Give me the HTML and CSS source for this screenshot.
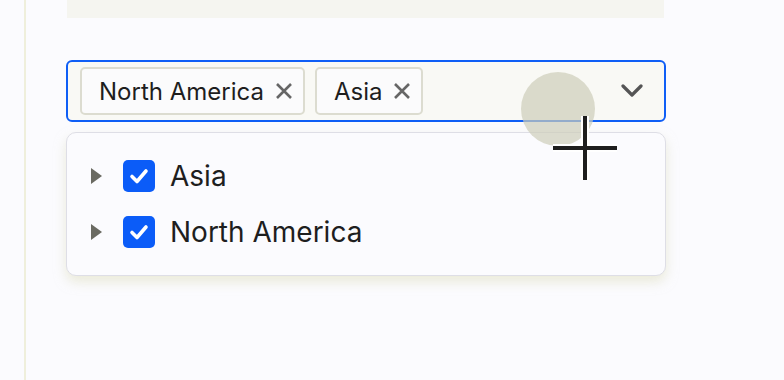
FILE: index.html
```html
<!DOCTYPE html>
<html>
<head>
<meta charset="utf-8">
<link rel="stylesheet" href="styles.css">
</head>
<body>
<div class="page">
  <div class="column">
    <div class="topbox"></div>
    <div class="select">
      <div class="tags">
        <span class="tag">North America<svg class="x" viewBox="0 0 18 18"><path d="M2 2L16 16M16 2L2 16"/></svg></span>
        <span class="tag">Asia<svg class="x" viewBox="0 0 18 18"><path d="M2 2L16 16M16 2L2 16"/></svg></span>
      </div>
      <svg class="chev" viewBox="0 0 22 14"><path d="M2 2L11 11L20 2"/></svg>
      <div class="ripple"></div>
    </div>
    <div class="menu">
      <div class="row"><span class="caret"></span><span class="cb"><svg viewBox="0 0 32 32"><path d="M9 16.5L14 21.5L23 11"/></svg></span><span class="label">Asia</span></div>
      <div class="row"><span class="caret"></span><span class="cb"><svg viewBox="0 0 32 32"><path d="M9 16.5L14 21.5L23 11"/></svg></span><span class="label">North America</span></div>
    </div>
    <svg class="cursor" viewBox="0 0 70 70"><path class="outline" d="M35 3V67M3 35H67"/><path class="stroke" d="M35 3V67M3 35H67"/></svg>
  </div>
</div>
</body>
</html>
```

FILE: styles.css
```css
html, body {
  margin: 0;
  padding: 0;
  background: #fbfbfe;
  font-family: Inter, "Noto Sans", sans-serif;
  color: #1e1e1e;
}
.page {
  margin-left: 24px;
  border-left: 2px solid #efefdc;
  height: 380px;
  box-sizing: border-box;
  padding-left: 40px;
}
.column {
  position: relative;
  width: 600px;
}
.topbox {
  height: 18px;
  margin-left: 1px;
  width: 597px;
  background: #f5f5f0;
}
.select {
  position: relative;
  margin-top: 42px;
  height: 62px;
  box-sizing: border-box;
  border: 2px solid #0f5ef6;
  border-radius: 6px;
  background: #f9f9f5;
  display: flex;
  align-items: center;
  padding: 0 12px;
}
.tags {
  display: flex;
  gap: 10px;
  flex: 1;
}
.tag {
  display: inline-flex;
  align-items: center;
  height: 48px;
  box-sizing: border-box;
  border: 2px solid #dcdcd0;
  border-radius: 5px;
  background: #fbfbfc;
  padding: 0 10px 0 17px;
  font-size: 24px;
  color: #1e1e1e;
}
.x {
  width: 18px;
  height: 18px;
  margin-left: 11px;
  fill: none;
  stroke: #666;
  stroke-width: 2.6;
}
.chev {
  width: 22px;
  height: 14px;
  margin-right: 9px;
  fill: none;
  stroke: #555;
  stroke-width: 3.2;
  stroke-linecap: round;
  stroke-linejoin: round;
}
.ripple {
  position: absolute;
  left: 453px;
  top: 10px;
  width: 74px;
  height: 74px;
  border-radius: 50%;
  background: rgba(205, 205, 185, 0.7);
}
.menu {
  margin-top: 10px;
  height: 144px;
  box-sizing: border-box;
  border: 1px solid #dedee6;
  border-radius: 10px;
  background: #fbfbfe;
  box-shadow: 0 6px 12px rgba(220, 220, 190, 0.55);
  padding: 27px 0 0 24px;
  display: flex;
  flex-direction: column;
  gap: 24px;
}
.row {
  display: flex;
  align-items: center;
  height: 32px;
}
.caret {
  width: 0;
  height: 0;
  border-top: 8px solid transparent;
  border-bottom: 8px solid transparent;
  border-left: 11px solid #6a6a62;
  margin-right: 21px;
}
.cb {
  width: 32px;
  height: 32px;
  border-radius: 5px;
  background: #0b5cf8;
  display: flex;
}
.cb svg {
  width: 32px;
  height: 32px;
  fill: none;
  stroke: #fff;
  stroke-width: 3.6;
  stroke-linecap: round;
  stroke-linejoin: round;
}
.label {
  margin-left: 15px;
  font-size: 28px;
  color: #1e1e1e;
}
.cursor {
  position: absolute;
  left: 484px;
  top: 113px;
  width: 70px;
  height: 70px;
}
.cursor .outline {
  stroke: #fff;
  stroke-width: 8;
  fill: none;
}
.cursor .stroke {
  stroke: #1e1e1e;
  stroke-width: 4;
  fill: none;
}
```
